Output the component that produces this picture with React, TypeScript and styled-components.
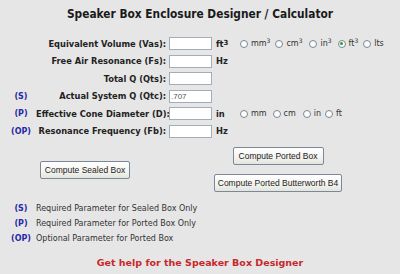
import styled, { createGlobalStyle } from "styled-components";

const Global = createGlobalStyle`
  html, body {
    margin: 0;
    padding: 0;
    background: #e6e6e6;
  }
  body {
    font-family: "DejaVu Sans", Verdana, sans-serif;
    color: #222;
  }
`;

const Page = styled.div`
  width: 400px;
  height: 274px;
  overflow: hidden;
  background: #e6e6e6;
`;

const Title = styled.h1`
  margin: 0;
  padding-top: 7px;
  height: 30px;
  box-sizing: border-box;
  text-align: center;
  font-family: "DejaVu Sans Condensed", "DejaVu Sans", sans-serif;
  font-stretch: condensed;
  font-size: 11.8px;
  font-weight: bold;
  color: #1a1a1a;
`;

const Form = styled.div`
  display: flex;
  flex-direction: column;
  padding-top: 7px;
  row-gap: 5px;
`;

const Row = styled.div`
  display: grid;
  grid-template-columns: 36px 133px 47px 24px auto;
  align-items: center;
  height: 12.5px;
`;

const Tag = styled.span`
  color: #2828a8;
  font-weight: bold;
  font-size: 8px;
  text-align: center;
  padding-left: 6px;
`;

const Label = styled.label`
  font-size: 8.3px;
  font-weight: bold;
  text-align: right;
  white-space: nowrap;
  padding-right: 3px;
`;

const Field = styled.input`
  box-sizing: border-box;
  width: 43px;
  height: 13px;
  margin: 0;
  padding: 0 1px;
  border: 1px solid #a3adb8;
  background: #fff;
  font-family: "Liberation Sans", Arial, sans-serif;
  font-size: 8px;
  color: #555;
  outline: none;
`;

const Unit = styled.span`
  font-size: 8.3px;
  font-weight: bold;
  white-space: nowrap;
  sup {
    font-size: 7px;
    vertical-align: 2px;
    line-height: 0;
  }
`;

const Radios = styled.div`
  display: flex;
  align-items: center;
`;

const Option = styled.span<{ $gap: number }>`
  display: flex;
  align-items: center;
  margin-right: ${(p) => p.$gap}px;
`;

const OptionText = styled.span`
  font-size: 8px;
  color: #333;
  white-space: nowrap;
  sup {
    font-size: 6px;
    vertical-align: 3px;
    line-height: 0;
  }
`;

const Dot = styled.span<{ $on?: boolean }>`
  box-sizing: border-box;
  width: 8px;
  height: 8px;
  margin-right: 3px;
  border-radius: 50%;
  border: 1px solid #7a8794;
  background: #fbfbfb;
  display: flex;
  align-items: center;
  justify-content: center;
  &::after {
    content: "";
    display: ${(p) => (p.$on ? "block" : "none")};
    width: 3px;
    height: 3px;
    border-radius: 50%;
    background: #2f9a2f;
  }
`;

const Actions = styled.div`
  display: grid;
  grid-template-columns: 170px 216px;
  align-items: center;
  margin-top: 10px;
`;

const Stack = styled.div`
  display: flex;
  flex-direction: column;
  align-items: center;
  row-gap: 9px;
`;

const Button = styled.button<{ $w: number }>`
  justify-self: center;
  box-sizing: border-box;
  width: ${(p) => p.$w}px;
  height: 18px;
  padding: 0;
  border: 1px solid #7c8898;
  border-radius: 2px;
  background: linear-gradient(#ffffff, #f3f3ef 60%, #e4e4de);
  font-family: "Liberation Sans", Arial, sans-serif;
  font-size: 8.5px;
  color: #222;
`;

const Legend = styled.div`
  display: flex;
  flex-direction: column;
  row-gap: 3px;
  margin-top: 11px;
`;

const LegendRow = styled.div`
  display: grid;
  grid-template-columns: 36px auto;
  align-items: center;
  height: 11.7px;
`;

const LegendText = styled.span`
  font-size: 8px;
  color: #333;
  white-space: nowrap;
`;

const Help = styled.a`
  display: block;
  margin-top: 13px;
  text-align: center;
  font-size: 9.5px;
  font-weight: bold;
  color: #c8282c;
  text-decoration: none;
`;

type Opt = { t: string; sup?: boolean; on?: boolean; gap: number };

const volume: Opt[] = [
  { t: "mm", sup: true, gap: 5 },
  { t: "cm", sup: true, gap: 7 },
  { t: "in", sup: true, gap: 6 },
  { t: "ft", sup: true, on: true, gap: 5 },
  { t: "lts", gap: 0 },
];

const length: Opt[] = [
  { t: "mm", gap: 6 },
  { t: "cm", gap: 7 },
  { t: "in", gap: 4 },
  { t: "ft", gap: 0 },
];

const Choices = ({ items }: { items: Opt[] }) => (
  <Radios>
    {items.map((o) => (
      <Option key={o.t} $gap={o.gap}>
        <Dot $on={o.on} />
        <OptionText>
          {o.t}
          {o.sup && <sup>3</sup>}
        </OptionText>
      </Option>
    ))}
  </Radios>
);

const App = () => (
  <Page>
    <Global />
    <Title>Speaker Box Enclosure Designer / Calculator</Title>
    <Form>
      <Row>
        <Tag />
        <Label>Equivalent Volume (Vas):</Label>
        <Field />
        <Unit>
          ft<sup>3</sup>
        </Unit>
        <Choices items={volume} />
      </Row>
      <Row>
        <Tag />
        <Label>Free Air Resonance (Fs):</Label>
        <Field />
        <Unit>Hz</Unit>
      </Row>
      <Row>
        <Tag />
        <Label>Total Q (Qts):</Label>
        <Field />
      </Row>
      <Row>
        <Tag>(S)</Tag>
        <Label>Actual System Q (Qtc):</Label>
        <Field defaultValue=".707" />
      </Row>
      <Row>
        <Tag>(P)</Tag>
        <Label>Effective Cone Diameter (D):</Label>
        <Field />
        <Unit>in</Unit>
        <Choices items={length} />
      </Row>
      <Row>
        <Tag>(OP)</Tag>
        <Label>Resonance Frequency (Fb):</Label>
        <Field />
        <Unit>Hz</Unit>
      </Row>
    </Form>
    <Actions>
      <Button $w={90}>Compute Sealed Box</Button>
      <Stack>
        <Button $w={91}>Compute Ported Box</Button>
        <Button $w={128}>Compute Ported Butterworth B4</Button>
      </Stack>
    </Actions>
    <Legend>
      <LegendRow>
        <Tag>(S)</Tag>
        <LegendText>Required Parameter for Sealed Box Only</LegendText>
      </LegendRow>
      <LegendRow>
        <Tag>(P)</Tag>
        <LegendText>Required Parameter for Ported Box Only</LegendText>
      </LegendRow>
      <LegendRow>
        <Tag>(OP)</Tag>
        <LegendText>Optional Parameter for Ported Box</LegendText>
      </LegendRow>
    </Legend>
    <Help href="#">Get help for the Speaker Box Designer</Help>
  </Page>
);

export default App;
